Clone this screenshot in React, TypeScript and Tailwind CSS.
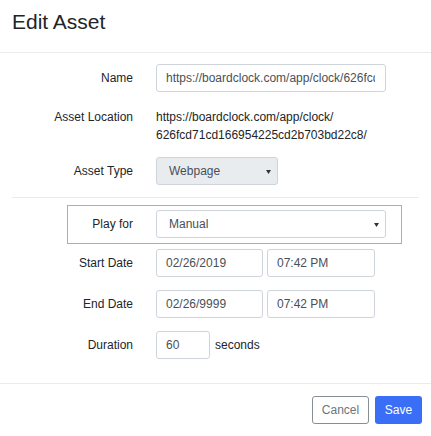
import React from 'react';

const inputCls =
  'h-[28px] border border-[#ced4da] rounded-[3px] bg-white text-[12px] text-[#495057] pl-[9px] pr-[10px] outline-none';

const Arrow = () => (
  <svg width="5" height="4" viewBox="0 0 5 4" className="absolute right-[6px] top-[12px]">
    <path d="M0 0h5L2.5 4z" fill="#333" />
  </svg>
);

const Select = ({ value, width, disabled }: { value: string; width: string; disabled?: boolean }) => (
  <div
    className={`relative h-[28px] border border-[#ced4da] rounded-[3px] text-[12px] text-[#495057] pl-[12px] flex items-center ${width} ${
      disabled ? 'bg-[#e9ecef]' : 'bg-white'
    }`}
  >
    {value}
    <Arrow />
  </div>
);

const Row = ({ label, children, className = '' }: { label: string; children: React.ReactNode; className?: string }) => (
  <div className={`flex items-center ${className}`}>
    <label className="w-[121px] text-right">{label}</label>
    <div className="ml-[23px] flex items-center">{children}</div>
  </div>
);

const App = () => {
  return (
    <div className="w-[431px] h-[436px] bg-white text-[#212529] text-[12px] overflow-hidden" style={{ fontFamily: '"Liberation Sans", Arial, sans-serif' }}>
      <div className="h-[53px] border-b border-[#e9ecef] px-[12px] pt-[6px]">
        <h5 className="text-[21px] leading-[31px] text-[#212529]">Edit Asset</h5>
      </div>

      <div className="px-[12px] pt-[11px] pb-[24px]">
        <Row label="Name">
          <input
            readOnly
            value="https://boardclock.com/app/clock/626fcd71cd166954225cd2b703bd22c8/"
            className={`${inputCls} w-[230px]`}
          />
        </Row>

        <div className="flex mt-[16px] leading-[18px]">
          <label className="w-[121px] text-right">Asset Location</label>
          <div className="ml-[23px]">
            https://boardclock.com/app/clock/
            <br />
            626fcd71cd166954225cd2b703bd22c8/
          </div>
        </div>

        <Row label="Asset Type" className="mt-[13px]">
          <Select value="Webpage" width="w-[122px]" disabled />
        </Row>

        <div className="mt-[12px] border-t border-[#e9ecef]" />

        <div className="mt-[7px] ml-[55px] w-[335px] border border-[#f39a5a] flex items-center pt-[4px] pb-[5px]">
          <label className="w-[65px] text-right">Play for</label>
          <div className="ml-[23px]">
            <Select value="Manual" width="w-[230px]" />
          </div>
        </div>

        <Row label="Start Date" className="mt-[5px]">
          <input readOnly value="02/26/2019" className={`${inputCls} w-[107px]`} />
          <input readOnly value="07:42 PM" className={`${inputCls} w-[108px] ml-[4px]`} />
        </Row>

        <Row label="End Date" className="mt-[13px]">
          <input readOnly value="02/26/9999" className={`${inputCls} w-[107px]`} />
          <input readOnly value="07:42 PM" className={`${inputCls} w-[108px] ml-[4px]`} />
        </Row>

        <Row label="Duration" className="mt-[13px]">
          <input readOnly value="60" className={`${inputCls} w-[54px]`} />
          <span className="ml-[5px]">seconds</span>
        </Row>
      </div>

      <div className="border-t border-[#e9ecef] pt-[12px] px-[9px] flex justify-end gap-[6px]">
        <button className="h-[28px] w-[57px] border border-[#868e96] rounded-[3px] text-[12px] text-[#6c757d] bg-white">
          Cancel
        </button>
        <button className="h-[28px] w-[47px] rounded-[3px] text-[12px] text-white bg-[#3a6ef6]">Save</button>
      </div>
    </div>
  );
};

export default App;
